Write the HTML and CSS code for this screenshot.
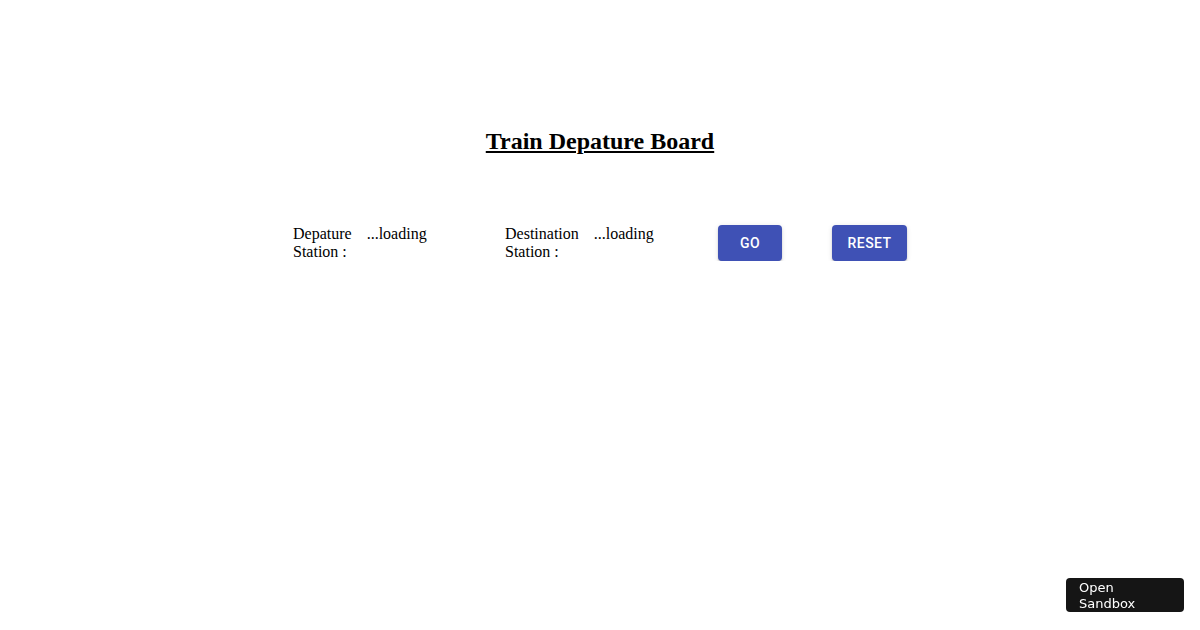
FILE: index.html
```html
<!DOCTYPE html>
<html>
<head>
<meta charset="utf-8">
<link rel="stylesheet" href="styles.css">
</head>
<body>
<div class="app">
  <h2 class="title">Train Depature Board</h2>
  <div class="row">
    <div class="field field-dep">
      <span class="label">Depature Station :</span>
      <span class="value">...loading</span>
    </div>
    <div class="field field-dest">
      <span class="label">Destination Station :</span>
      <span class="value">...loading</span>
    </div>
    <div class="btn-cell btn-cell-go">
      <button class="btn">Go</button>
    </div>
    <div class="btn-cell">
      <button class="btn btn-reset">Reset</button>
    </div>
  </div>
</div>
<div class="sandbox">Open Sandbox</div>
</body>
</html>
```
FILE: styles.css
```css
html, body {
  margin: 0;
  padding: 0;
  background: #fff;
}
body {
  font-family: "Liberation Serif", "Times New Roman", serif;
  font-size: 16px;
  color: #000;
}
.app {
  padding-top: 128px;
}
.title {
  margin: 0;
  text-align: center;
  font-size: 24px;
  font-weight: bold;
  text-decoration: underline;
  line-height: 27px;
}
.row {
  width: 614px;
  margin: 70px auto 0;
  display: flex;
  align-items: flex-start;
}
.row > * {
  flex-shrink: 0;
}
.field {
  display: flex;
  align-items: flex-start;
  line-height: 18px;
}
.field-dep {
  width: 212px;
}
.field-dest {
  width: 213px;
}
.label {
  width: min-content;
  margin-right: 15px;
}
.btn-cell-go {
  width: 114px;
}
.btn {
  font-family: Roboto, "Liberation Sans", sans-serif;
  font-weight: 500;
  font-size: 14px;
  letter-spacing: 0.02857em;
  text-transform: uppercase;
  color: #fff;
  background: #3f51b5;
  border: none;
  border-radius: 4px;
  min-width: 64px;
  height: 36px;
  padding: 6px 16px;
  box-shadow: 0 3px 1px -2px rgba(0,0,0,0.2), 0 2px 2px 0 rgba(0,0,0,0.14), 0 1px 5px 0 rgba(0,0,0,0.12);
  cursor: pointer;
}
.btn-reset {
  width: 75px;
  padding: 6px 0;
}
.sandbox {
  position: fixed;
  right: 16px;
  bottom: 18px;
  width: 118px;
  height: 34px;
  box-sizing: border-box;
  padding: 2px 40px 0 13px;
  background: #151515;
  color: #fff;
  border-radius: 4px;
  font-family: "DejaVu Sans", sans-serif;
  font-size: 13px;
  line-height: 16px;
}
```
